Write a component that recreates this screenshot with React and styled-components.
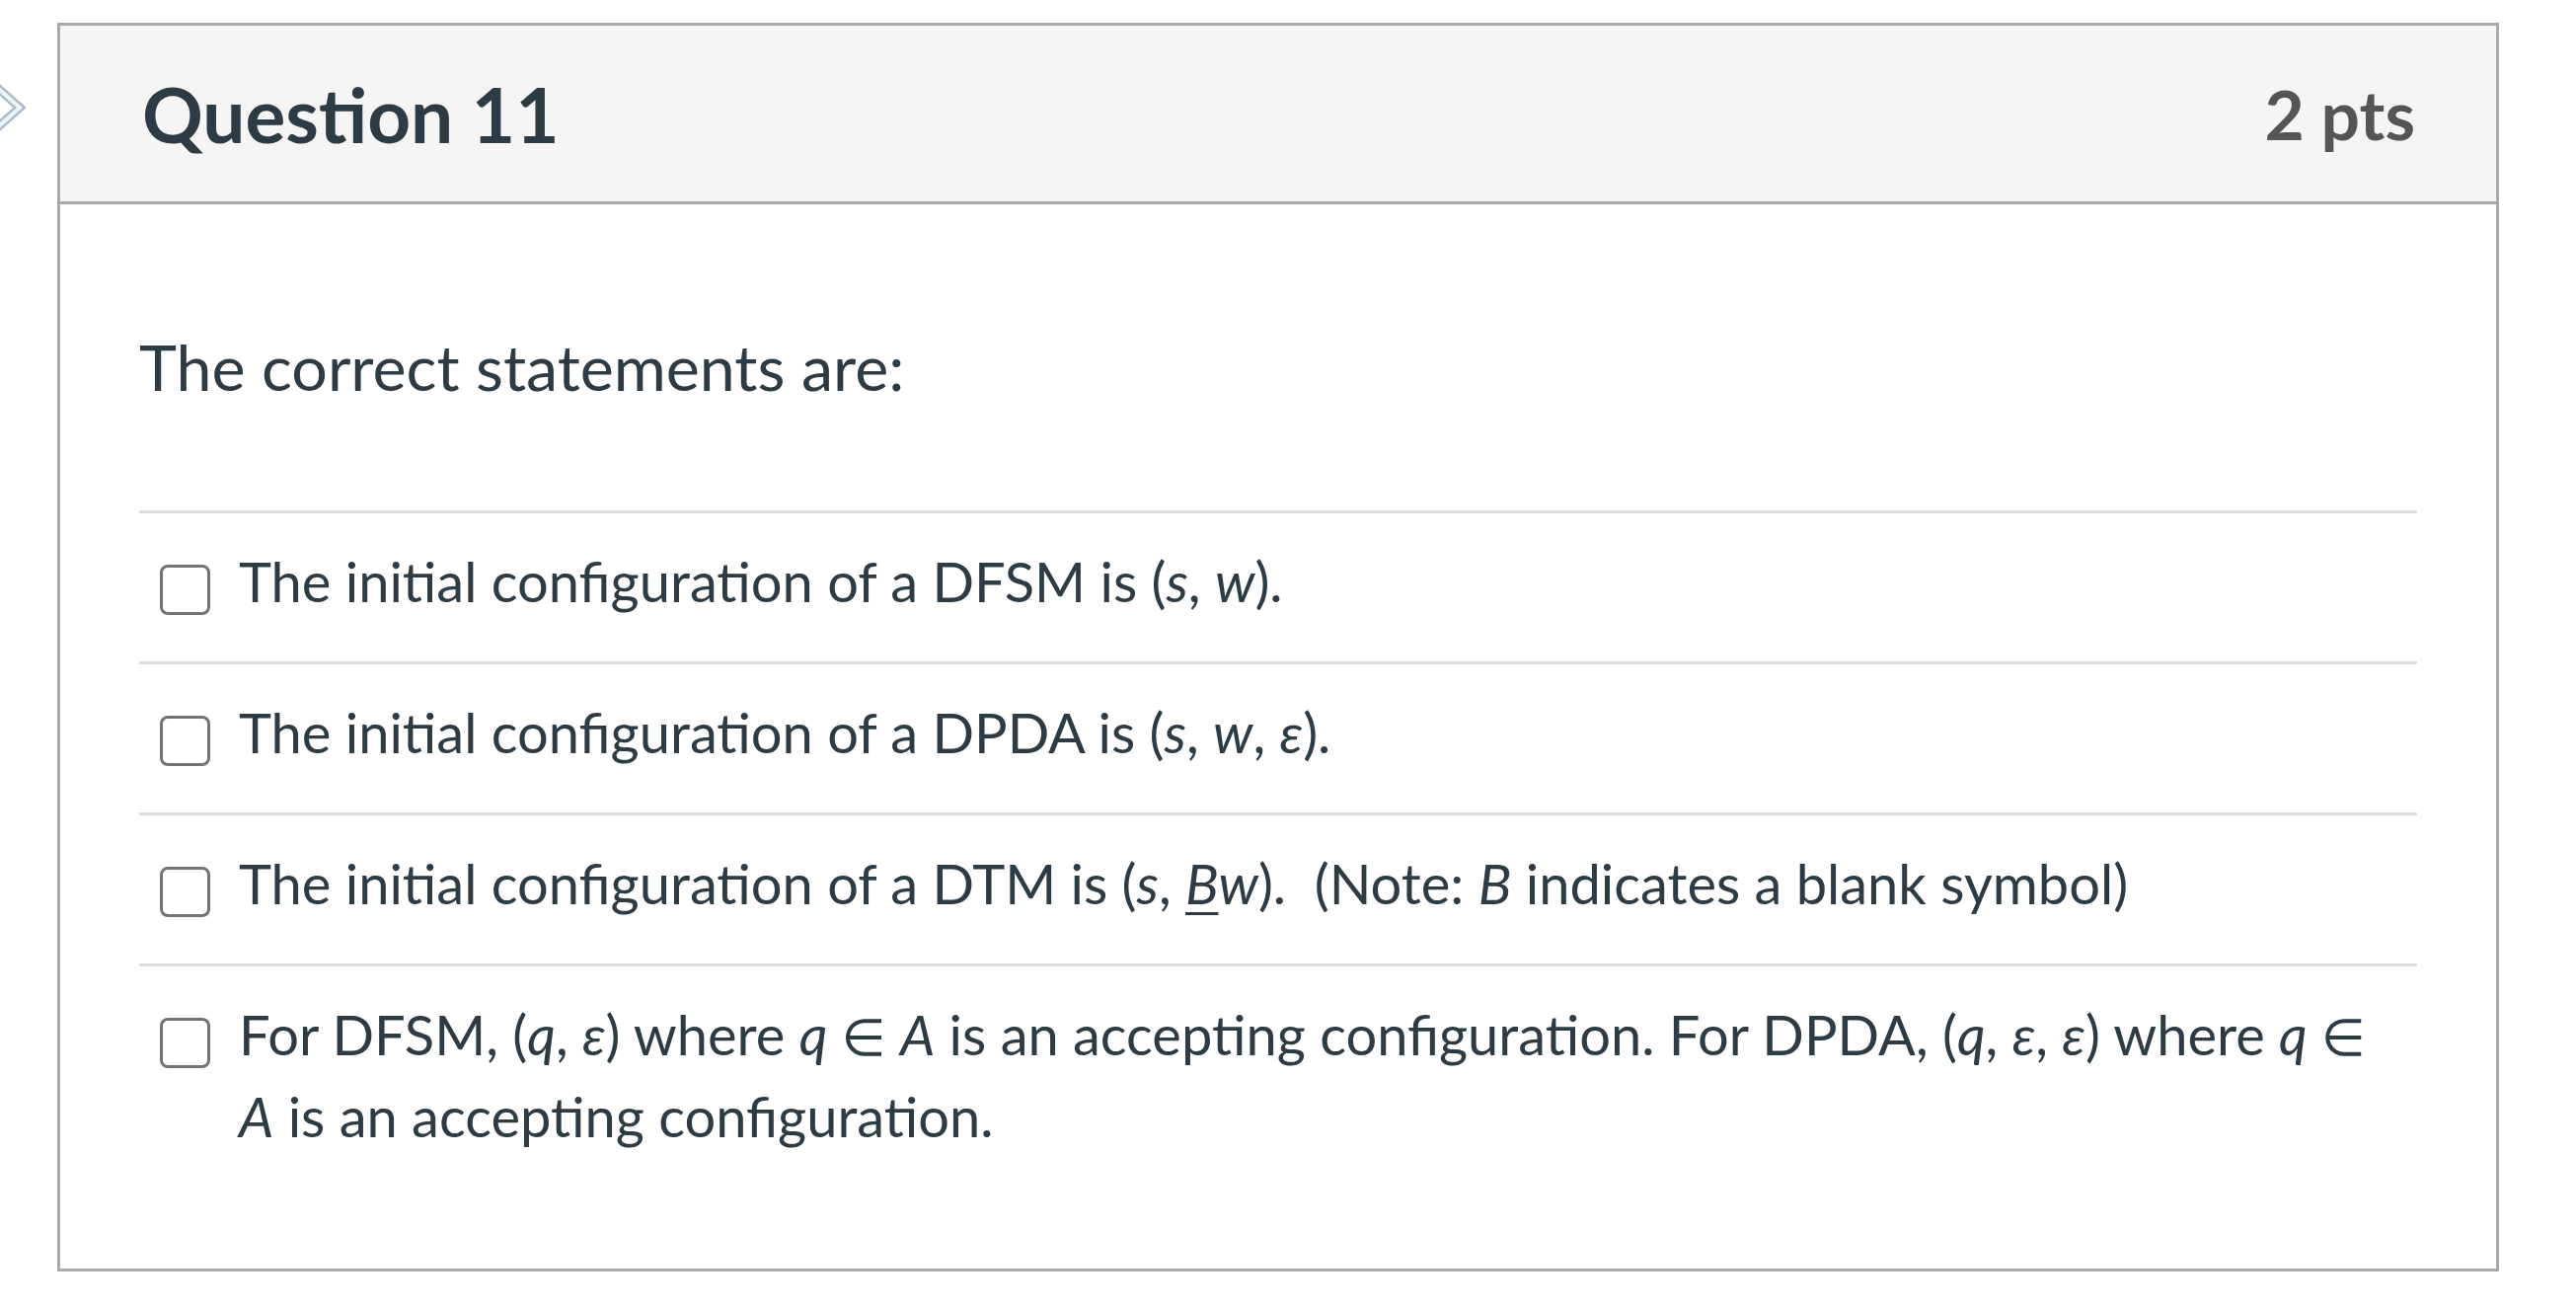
import React from 'react'
import styled, { createGlobalStyle } from 'styled-components'

const GlobalStyle = createGlobalStyle`
  html, body {
    margin: 0;
    padding: 0;
    background: #ffffff;
  }
  body {
    font-family: Lato, "Open Sans", "DejaVu Sans", sans-serif;
    color: #2d3b45;
  }
`

const Page = styled.div`
  display: flex;
  flex-direction: row;
  padding-top: 23px;
  width: 2610px;
  height: 1326px;
  box-sizing: border-box;
`

const MarkerColumn = styled.div`
  width: 58px;
  flex: none;
  padding-top: 52px;
  box-sizing: border-box;
`

const MarkerSvg = styled.svg`
  display: block;
`

const QuestionBox = styled.div`
  width: 2474px;
  height: 1265px;
  box-sizing: border-box;
  border: 3px solid #a9a9a9;
  display: flex;
  flex-direction: column;
`

const Header = styled.div`
  height: 181px;
  flex: none;
  box-sizing: border-box;
  background: #f5f5f5;
  border-bottom: 3px solid #a9a9a9;
  display: flex;
  align-items: center;
  justify-content: space-between;
  padding: 0 82px 0 83px;
`

const Title = styled.h2`
  margin: 0;
  font-size: 76.5px;
  font-weight: 700;
  line-height: normal;
  color: #2d3b45;
`

const Points = styled.div`
  font-size: 69.5px;
  font-weight: 700;
  line-height: normal;
  color: #555555;
`

const Body = styled.div`
  padding: 125px 80px 0 80px;
`

const Prompt = styled.p`
  margin: 0 0 106px;
  font-size: 64.5px;
  line-height: 79px;
  color: #2d3b45;
`

const AnswerList = styled.div`
  display: flex;
  flex-direction: column;
`

const AnswerRow = styled.div`
  display: flex;
  align-items: flex-start;
  border-top: 3px solid #dedede;
  padding: 29px 0 41px 21px;
`

const CheckBox = styled.input`
  appearance: none;
  -webkit-appearance: none;
  flex: none;
  width: 51px;
  height: 51px;
  margin: 23px 29px 0 0;
  box-sizing: border-box;
  border: 3px solid #737373;
  border-radius: 8px;
  background: #ffffff;
`

const AnswerText = styled.div`
  font-size: 56px;
  line-height: 80px;
  color: #2d3b45;
  padding-right: 14px;
`

const Var = styled.i`
  font-style: italic;
`

const Blank = styled(Var)`
  text-decoration: underline;
  text-decoration-thickness: 3px;
  text-underline-offset: 8px;
`

const Sym = styled.span`
  font-family: "DejaVu Sans", sans-serif;
  font-size: 0.92em;
`

const answers = [
  {
    id: 1,
    text: (
      <>
        The initial configuration of a DFSM is (<Var>s</Var>, <Var>w</Var>).
      </>
    ),
  },
  {
    id: 2,
    text: (
      <>
        The initial configuration of a DPDA is (<Var>s</Var>, <Var>w</Var>, <Var>ε</Var>).
      </>
    ),
  },
  {
    id: 3,
    text: (
      <>
        The initial configuration of a DTM is (<Var>s</Var>, <Blank>B</Blank><Var>w</Var>).&nbsp; (Note:{' '}
        <Var>B</Var> indicates a blank symbol)
      </>
    ),
  },
  {
    id: 4,
    text: (
      <>
        For DFSM, (<Var>q</Var>, <Var>ε</Var>) where <Var>q</Var> <Sym>∈</Sym> <Var>A</Var> is an accepting
        configuration. For DPDA, (<Var>q</Var>, <Var>ε</Var>, <Var>ε</Var>) where <Var>q</Var> <Sym>∈</Sym>{' '}
        <Var>A</Var> is an accepting configuration.
      </>
    ),
  },
]

const Marker = () => (
  <MarkerSvg width="26" height="70" viewBox="0 0 26 70">
    <polyline points="-16,2 20,34 -16,66" fill="none" stroke="#a9bccb" strokeWidth="9" strokeLinejoin="miter" />
    <polyline points="-16,2 20,34 -16,66" fill="none" stroke="#eef3f6" strokeWidth="4" strokeLinejoin="miter" />
  </MarkerSvg>
)

const App = () => {
  return (
    <>
      <GlobalStyle />
      <Page>
        <MarkerColumn>
          <Marker />
        </MarkerColumn>
        <QuestionBox>
          <Header>
            <Title>Question 11</Title>
            <Points>2 pts</Points>
          </Header>
          <Body>
            <Prompt>The correct statements are:</Prompt>
            <AnswerList>
              {answers.map((a) => (
                <AnswerRow key={a.id}>
                  <CheckBox type="checkbox" aria-label={`answer ${a.id}`} />
                  <AnswerText>{a.text}</AnswerText>
                </AnswerRow>
              ))}
            </AnswerList>
          </Body>
        </QuestionBox>
      </Page>
    </>
  )
}

export default App
